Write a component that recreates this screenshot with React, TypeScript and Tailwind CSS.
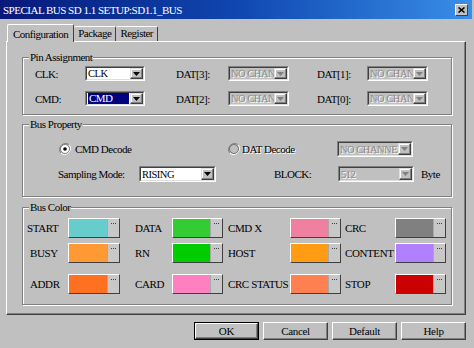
import React from "react";

function Arrow({ disabled }: { disabled?: boolean }) {
  return (
    <svg width="7" height="4" viewBox="0 0 7 4">
      <path d="M0 0h7L3.5 4z" fill={disabled ? "#808080" : "#000"} />
    </svg>
  );
}

function Select({
  w,
  value,
  disabled,
  selected,
  h = "h-[15px]",
}: {
  w: string;
  value: string;
  disabled?: boolean;
  selected?: boolean;
  h?: string;
}) {
  return (
    <div
      className={`${w} ${h} shrink-0 flex border border-t-[#808080] border-l-[#808080] border-r-white border-b-white`}
    >
      <div className="flex flex-1 min-w-0 border border-t-[#404040] border-l-[#404040] border-r-[#dfdfdf] border-b-[#dfdfdf]">
        <div
          className={`flex-1 min-w-0 overflow-hidden flex items-center ${
            disabled ? "bg-[#c0c0c0]" : "bg-white"
          }`}
        >
          {selected ? (
            <div className="flex-1 h-full ml-[1px] mr-[1px] bg-[#000080] text-white text-[11px] tracking-[-0.5px] leading-[11px] pl-[1px] flex items-center whitespace-nowrap">
              {value}
            </div>
          ) : (
            <span
              className={`text-[10.5px] tracking-[-0.5px] leading-[11px] pl-[1px] whitespace-nowrap ${
                disabled ? "text-[#8a8a8a] [text-shadow:1px_1px_0_#fff]" : "text-black"
              }`}
            >
              {value}
            </span>
          )}
        </div>
        <div className="w-[13px] shrink-0 flex items-center justify-center bg-[#c0c0c0] border border-t-[#dfdfdf] border-l-[#dfdfdf] border-r-[#404040] border-b-[#404040] shadow-[inset_-1px_-1px_0_#808080,inset_1px_1px_0_#fff]">
          <Arrow disabled={disabled} />
        </div>
      </div>
    </div>
  );
}

function Group({
  title,
  className,
  children,
}: {
  title: string;
  className: string;
  children: React.ReactNode;
}) {
  return (
    <div
      className={`relative w-[430px] border border-[#808080] shadow-[1px_1px_0_#fff,inset_1px_1px_0_#fff] ${className}`}
    >
      <span className="absolute -top-[8px] left-[6px] bg-[#c0c0c0] px-[1px] text-[11px] tracking-[-0.5px] leading-[14px] text-black">
        {title}
      </span>
      {children}
    </div>
  );
}

function Radio({ checked, disabled }: { checked?: boolean; disabled?: boolean }) {
  return (
    <svg width="12" height="12" viewBox="0 0 12 12" className="shrink-0">
      <path d="M10.2 1.8A6 6 0 0 0 1.8 10.2" fill="none" stroke="#808080" strokeWidth="1" />
      <path d="M1.8 10.2A6 6 0 0 0 10.2 1.8" fill="none" stroke="#fff" strokeWidth="1" />
      <circle cx="6" cy="6" r="4.5" fill={disabled ? "#c0c0c0" : "#fff"} stroke="#404040" strokeWidth="0.6" />
      {checked && <circle cx="6" cy="6" r="1.8" fill="#000" />}
    </svg>
  );
}

function Swatch({ color }: { color: string }) {
  return (
    <div className="h-[20px] flex border border-t-white border-l-white border-r-[#404040] border-b-[#404040] shadow-[inset_-1px_-1px_0_#808080]">
      <div className={`flex-1 ${color}`} />
      <div className="w-[12px] shrink-0 bg-[#c8c8c8] border-l border-[#a8a8a8] flex justify-center items-start pt-[4px] gap-[1px]">
        <div className="w-[1px] h-[1px] bg-[#404040]" />
        <div className="w-[1px] h-[1px] bg-[#404040]" />
        <div className="w-[1px] h-[1px] bg-[#404040]" />
      </div>
    </div>
  );
}

function Btn({ label, def }: { label: string; def?: boolean }) {
  return (
    <div className={`w-[65px] h-[18px] flex ${def ? "border border-black" : ""}`}>
      <div className="flex-1 flex items-center justify-center border border-t-white border-l-white border-r-[#404040] border-b-[#404040] shadow-[inset_-1px_-1px_0_#808080] text-[11px] tracking-[-0.3px] leading-[12px] text-black">
        {label}
      </div>
    </div>
  );
}

const colorRows = [
  [
    { l: "START", c: "bg-[#66cccc]", p: "pl-[4px]" },
    { l: "DATA", c: "bg-[#33cc33]" },
    { l: "CMD X", c: "bg-[#f080a0]" },
    { l: "CRC", c: "bg-[#808080]" },
  ],
  [
    { l: "BUSY", c: "bg-[#ff9933]", p: "pl-[7px]" },
    { l: "RN", c: "bg-[#00cc00]" },
    { l: "HOST", c: "bg-[#ff9c14]" },
    { l: "CONTENT", c: "bg-[#b080ff]" },
  ],
  [
    { l: "ADDR", c: "bg-[#ff7020]", p: "pl-[7px]" },
    { l: "CARD", c: "bg-[#ff80c0]" },
    { l: "CRC STATUS", c: "bg-[#ff8050]" },
    { l: "STOP", c: "bg-[#cc0000]" },
  ],
];

function ColorRow({
  row,
  className,
}: {
  row: { l: string; c: string; p?: string }[];
  className: string;
}) {
  const lab = "text-[11px] leading-[12px] text-black tracking-[-0.4px] whitespace-nowrap";
  return (
    <div
      className={`grid grid-cols-[45px_52px_52px_51px_67px_51px_54px_51px] items-center ${className}`}
    >
      <div className={`${row[0].p} ${lab}`}>{row[0].l}</div>
      <Swatch color={row[0].c} />
      <div className={`pl-[15px] ${lab}`}>{row[1].l}</div>
      <Swatch color={row[1].c} />
      <div className={`pl-[5px] ${lab}`}>{row[2].l}</div>
      <Swatch color={row[2].c} />
      <div className={`pl-[4px] ${lab}`}>{row[3].l}</div>
      <Swatch color={row[3].c} />
    </div>
  );
}

export default function App() {
  const lbl = "text-[11px] tracking-[-0.5px] leading-[14px] text-black whitespace-nowrap";
  return (
    <div className="w-[474px] h-[348px] overflow-hidden bg-[#c0c0c0] font-['Liberation_Serif',serif] flex flex-col">
      <div className="w-[472px] h-[19px] shrink-0 flex items-center justify-between bg-gradient-to-r from-[#08187a] via-[#1046b0] to-[#3a8ee8] pl-[3px] pr-[4px]">
        <span className="text-white text-[11px] tracking-[-0.5px] leading-[14px] whitespace-nowrap">
          SPECIAL BUS SD 1.1 SETUP:SD1.1_BUS
        </span>
        <div className="w-[13px] h-[12px] bg-[#c0c0c0] border border-t-white border-l-white border-r-[#404040] border-b-[#404040] flex items-center justify-center">
          <svg width="7" height="6" viewBox="0 0 7 6">
            <path d="M0.5 0.5L6.5 5.5M6.5 0.5L0.5 5.5" stroke="#000" strokeWidth="1.6" />
          </svg>
        </div>
      </div>

      <div className="flex items-end h-[17px] mt-[5px] ml-[7px] shrink-0 relative z-10">
        <div className="h-[18px] -mb-[1px] px-[5px] pt-[2px] bg-[#c0c0c0] border-l border-t border-white border-r border-r-[#404040] rounded-t-[2px] text-[11px] tracking-[-0.5px] leading-[14px] text-black">
          Configuration
        </div>
        <div className="h-[15px] px-[4px] border-t border-white border-r border-r-[#404040] rounded-t-[2px] text-[11px] tracking-[-0.5px] leading-[13px] text-black">
          Package
        </div>
        <div className="h-[15px] px-[4px] border-t border-white border-r border-r-[#404040] rounded-t-[2px] text-[11px] tracking-[-0.5px] leading-[13px] text-black">
          Register
        </div>
      </div>

      <div className="ml-[6px] w-[460px] h-[274px] shrink-0 border border-t-white border-l-white border-r-[#404040] border-b-[#404040] shadow-[inset_-1px_-1px_0_#808080] pt-[15px] pl-[15px] flex flex-col">
        <Group title="Pin Assignment" className="h-[58px] pt-[8px] pl-[12px]">
          <div className="flex items-center h-[15px]">
            <div className={`w-[50px] ${lbl}`}>CLK:</div>
            <Select w="w-[60px]" value="CLK" />
            <div className={`w-[52px] ml-[31px] ${lbl}`}>DAT[3]:</div>
            <Select w="w-[61px]" value="NO CHAN" disabled />
            <div className={`w-[50px] ml-[28px] ${lbl}`}>DAT[1]:</div>
            <Select w="w-[61px]" value="NO CHAN" disabled />
          </div>
          <div className="flex items-center h-[15px] mt-[10px]">
            <div className={`w-[50px] ${lbl}`}>CMD:</div>
            <Select w="w-[60px]" value="CMD" selected />
            <div className={`w-[52px] ml-[31px] ${lbl}`}>DAT[2]:</div>
            <Select w="w-[61px]" value="NO CHAN" disabled />
            <div className={`w-[50px] ml-[28px] ${lbl}`}>DAT[0]:</div>
            <Select w="w-[61px]" value="NO CHAN" disabled />
          </div>
        </Group>

        <Group title="Bus Property" className="h-[73px] mt-[9px] pt-[16px]">
          <div className="flex items-center h-[16px] pl-[36px]">
            <Radio checked />
            <span className={`ml-[4px] w-[153px] ${lbl}`}>CMD Decode</span>
            <Radio disabled />
            <span className={`ml-[2px] w-[95px] ${lbl} text-[#8a8a8a] [text-shadow:1px_1px_0_#fff]`}>
              DAT Decode
            </span>
            <Select w="w-[76px]" h="h-[16px]" value="NO CHANNE" disabled />
          </div>
          <div className="flex items-center h-[16px] mt-[9px] pl-[35px]">
            <span className={`w-[81px] ${lbl}`}>Sampling Mode:</span>
            <Select w="w-[77px]" h="h-[16px]" value="RISING" />
            <span className={`ml-[58px] w-[64px] ${lbl}`}>BLOCK:</span>
            <Select w="w-[76px]" h="h-[16px]" value="512" disabled />
            <span className={`ml-[7px] ${lbl}`}>Byte</span>
          </div>
        </Group>

        <Group title="Bus Color" className="h-[98px] mt-[10px] pt-[10px]">
          <ColorRow row={colorRows[0]} className="h-[20px]" />
          <ColorRow row={colorRows[1]} className="h-[20px] mt-[5px]" />
          <ColorRow row={colorRows[2]} className="h-[20px] mt-[11px]" />
        </Group>
      </div>

      <div className="flex justify-end gap-[4px] w-[466px] mt-[7px] shrink-0">
        <Btn label="OK" def />
        <Btn label="Cancel" />
        <Btn label="Default" />
        <Btn label="Help" />
      </div>
    </div>
  );
}
